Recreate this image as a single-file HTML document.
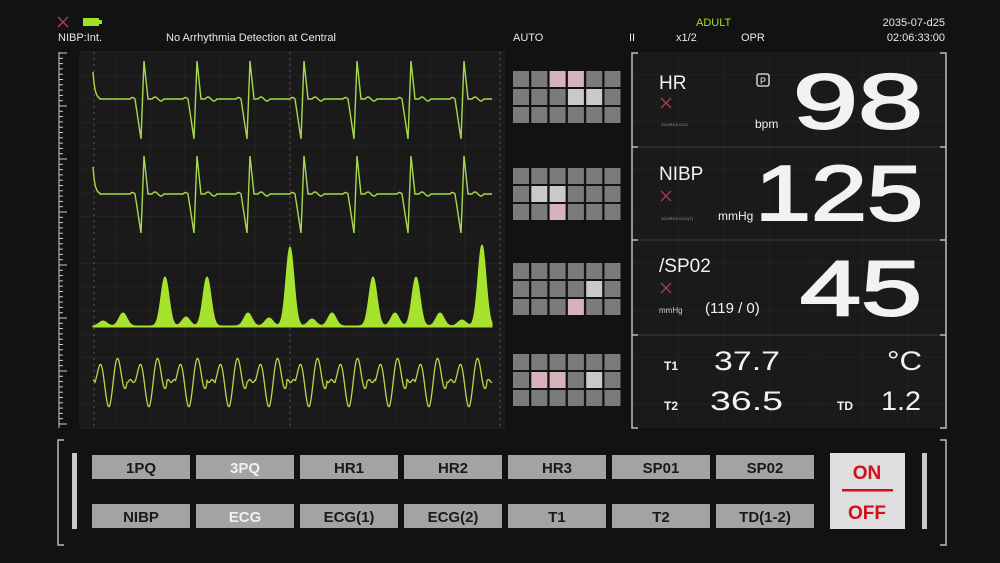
<!DOCTYPE html>
<html><head><meta charset="utf-8"><style>
html,body{margin:0;padding:0;background:#121212;width:1000px;height:563px;overflow:hidden}
svg{display:block}
text{font-family:"Liberation Sans",sans-serif}
</style></head><body>
<svg id="s" width="1000" height="563" viewBox="0 0 1000 563" xmlns="http://www.w3.org/2000/svg">
<rect width="1000" height="563" fill="#121212"/>
<rect x="80" y="52" width="425" height="376" fill="#1a1a1a"/>
<g id="grid" stroke="#232323" stroke-width="1"></g>
<g id="ruler" stroke="#cfcfcf" stroke-width="1"></g>
<g id="squares"></g>
<rect x="632" y="52" width="314" height="376" fill="#1a1a1a"/>
<g id="grid2" stroke="#232323" stroke-width="1"></g>
<g stroke="#3a3a3a" stroke-width="1">
<line x1="632" y1="147" x2="946" y2="147"/><line x1="632" y1="240" x2="946" y2="240"/><line x1="632" y1="335" x2="946" y2="335"/>
</g>
<g stroke="#bbb" stroke-width="1.5" fill="none">
<path d="M638 53H632V428H638"/><path d="M940 53H946V428H940"/>
<path d="M632 147H638M940 147H946M632 240H638M940 240H946M632 335H638M940 335H946"/>
</g>
<g id="paths"></g>
<g stroke="#a0404f" stroke-width="1.5"><path d="M58 17l10 10M68 17l-10 10"/></g>
<rect x="83" y="18" width="16" height="8" fill="#9fe02a"/><rect x="99" y="20" width="3" height="4" fill="#9fe02a"/>
<g fill="#e8e8e8" font-size="11">
<text x="58" y="41">NIBP:Int.</text>
<text x="166" y="41">No Arrhythmia Detection at Central</text>
<text x="513" y="41">AUTO</text>
<text x="629" y="41">II</text>
<text x="676" y="41">x1/2</text>
<text x="741" y="41">OPR</text>
<text x="945" y="26" text-anchor="end">2035-07-d25</text>
<text x="945" y="41" text-anchor="end">02:06:33:00</text>
</g>
<text x="696" y="26" fill="#9fe02a" font-size="11">ADULT</text>
<g fill="#f2f2f2">
<text x="659" y="89" font-size="19">HR</text>
<rect x="757" y="74" width="12" height="12" rx="2" fill="none" stroke="#eee" stroke-width="1.3"/><text x="760" y="84" font-size="9">P</text>
<text x="755" y="128" font-size="12">bpm</text>
<text x="793" y="128" font-size="78" textLength="130" lengthAdjust="spacingAndGlyphs" stroke="#f2f2f2" stroke-width="2">98</text>
<text x="659" y="180" font-size="19">NIBP</text>
<text x="718" y="220" font-size="12">mmHg</text>
<text x="755" y="220" font-size="78" textLength="168" lengthAdjust="spacingAndGlyphs" stroke="#f2f2f2" stroke-width="2">125</text>
<text x="659" y="272" font-size="19">/SP02</text>
<text x="659" y="313" font-size="8" fill="#ccc">mmHg</text>
<text x="705" y="313" font-size="15">(119 / 0)</text>
<text x="800" y="315" font-size="78" textLength="122" lengthAdjust="spacingAndGlyphs" stroke="#f2f2f2" stroke-width="2">45</text>
<text x="664" y="370" font-size="12" font-weight="bold">T1</text>
<text x="714" y="370" font-size="27" textLength="66" lengthAdjust="spacingAndGlyphs">37.7</text>
<text x="887" y="370" font-size="27" textLength="35" lengthAdjust="spacingAndGlyphs">°C</text>
<text x="664" y="410" font-size="12" font-weight="bold">T2</text>
<text x="710" y="410" font-size="27" textLength="73" lengthAdjust="spacingAndGlyphs">36.5</text>
<text x="837" y="410" font-size="12" font-weight="bold">TD</text>
<text x="881" y="410" font-size="27" textLength="40" lengthAdjust="spacingAndGlyphs">1.2</text>
<text x="661" y="126" font-size="4" fill="#999">SOURCE ECG</text>
<text x="661" y="220" font-size="4" fill="#999">SOURCE ECG(T)</text>
</g>
<g stroke="#a0404f" stroke-width="1.3"><path d="M661 98l10 10M671 98l-10 10M661 191l10 10M671 191l-10 10M661 283l10 10M671 283l-10 10"/></g>
<g stroke="#bbb" stroke-width="1.5" fill="none"><path d="M64 440H58V545H64"/><path d="M940 440H946V545H940"/></g>
<rect x="72" y="453" width="5" height="76" fill="#c8c8c8"/><rect x="922" y="453" width="5" height="76" fill="#c8c8c8"/>
<g id="btns" font-size="15" font-weight="bold"></g>
<rect x="830" y="453" width="75" height="76" fill="#dedede"/>
<text x="867" y="479" text-anchor="middle" fill="#d0101c" font-size="19" font-weight="bold">ON</text>
<rect x="842" y="489" width="51" height="2.5" fill="#d0101c"/>
<text x="867" y="519" text-anchor="middle" fill="#d0101c" font-size="19" font-weight="bold">OFF</text>
</svg>
<script>
const NS="http://www.w3.org/2000/svg";
function el(p,t,a){const e=document.createElementNS(NS,t);for(const k in a)e.setAttribute(k,a[k]);p.appendChild(e);return e;}
const g=document.getElementById('grid');
for(let x=80;x<=505;x+=35)el(g,'line',{x1:x,y1:52,x2:x,y2:428});
for(let y=52;y<=428;y+=23.5)el(g,'line',{x1:80,y1:y,x2:505,y2:y});
[94,290,500].forEach(x=>el(g,'line',{x1:x,y1:52,x2:x,y2:428,stroke:'#555','stroke-dasharray':'2 4'}));
const g2=document.getElementById('grid2');
for(let x=678;x<=946;x+=46)el(g2,'line',{x1:x,y1:52,x2:x,y2:428});
for(let y=75;y<=428;y+=47)el(g2,'line',{x1:632,y1:y,x2:946,y2:y});
const r=document.getElementById('ruler');
el(r,'line',{x1:59,y1:52,x2:59,y2:428});
for(let y=53,i=0;y<=428;y+=5.3,i++)el(r,'line',{x1:59,y1:y,x2:i%10==0?67:63,y2:y});
const sq=document.getElementById('squares');
const tops=[71,168,263,354];
const hl=[{"0,2":"p","0,3":"p","1,3":"l","1,4":"l"},{"1,1":"l","1,2":"l","2,2":"p"},{"1,4":"l","2,3":"p"},{"1,1":"p","1,2":"p","1,4":"l"}];
tops.forEach((t,gi)=>{for(let rr=0;rr<3;rr++)for(let c=0;c<6;c++){const k=hl[gi][rr+","+c];el(sq,'rect',{x:513+c*18.3,y:t+rr*18,width:16,height:16,fill:k=="p"?"#d6b3bb":k=="l"?"#c9c9c9":"#7b7b7b"});}});
const P=document.getElementById('paths');
const beats=[144,197,250,304,357,411,464];
function ecg(base,up,dn){let pts=[];
 for(let x=93;x<=492;x+=0.5){let y=base;
  if(x<100)y=base-27*Math.exp(-(x-93)/2);
  for(const b of beats){const dx=x-b;
   if(dx>-14&&dx<-9)y+=-1.5*Math.sin((dx+14)/5*Math.PI);
   if(dx>-9&&dx<-3)y+= (dn-base)*((dx+9)/6);
   else if(dx>=-3&&dx<0)y+= (dn-base)+(up-dn)*((dx+3)/3);
   else if(dx>=0&&dx<4)y+= (up-base)*(1-dx/4);
   if(dx>8&&dx<20)y+=-2*Math.sin((dx-8)/6*Math.PI);}
  pts.push(x.toFixed(1)+" "+y.toFixed(1));}
 el(P,'path',{d:"M"+pts.join("L"),fill:"none",stroke:"#a8d94a","stroke-width":1.4});}
ecg(99,61,139);ecg(194,156,233);
const pk=[[103,321,4],[123,313,4],[165,277,4],[186,317,4],[207,277,4],[248,313,4],[269,318,4],[290,247,4],[312,319,4],[332,313,4],[373,277,4],[395,313,4],[416,277,4],[440,313,4],[462,320,4],[482,245,4]];
let pp=["93 327"];for(let x=93;x<=492;x+=0.5){let y=326;for(const [px,py,w] of pk){y-=(326-py)*Math.exp(-((x-px)**2)/(2*w*w));}pp.push(x.toFixed(1)+" "+y.toFixed(1));}
pp.push("492 327");
el(P,'path',{d:"M"+pp.join("L")+"Z",fill:"#a6e22e",stroke:"#a6e22e","stroke-width":1});
let q=[];for(let x=93;x<=492;x+=0.5){const ph=((x-93)%40)/40;let y=381;
 if(ph>0.05&&ph<0.85){const t=(ph-0.05)/0.8;y+=-26*Math.sin(t*Math.PI*3.5)*Math.pow(Math.sin(t*Math.PI),0.6);}
 else y+=1.5*Math.sin(x);
 q.push(x.toFixed(1)+" "+y.toFixed(1));}
el(P,'path',{d:"M"+q.join("L"),fill:"none",stroke:"#b8d94a","stroke-width":1.3});
const B=document.getElementById('btns');
const r1=["1PQ","3PQ","HR1","HR2","HR3","SP01","SP02"],r2=["NIBP","ECG","ECG(1)","ECG(2)","T1","T2","TD(1-2)"];
[[r1,455],[r2,504]].forEach(([arr,y])=>arr.forEach((t,i)=>{const x=92+i*104;el(B,'rect',{x:x,y:y,width:98,height:24,fill:"#a3a3a3"});const tx=el(B,'text',{x:x+49,y:y+18,"text-anchor":"middle",fill:i==1?"#f0f0f0":"#1a1a1a"});tx.textContent=t;}));
</script>
</body></html>
